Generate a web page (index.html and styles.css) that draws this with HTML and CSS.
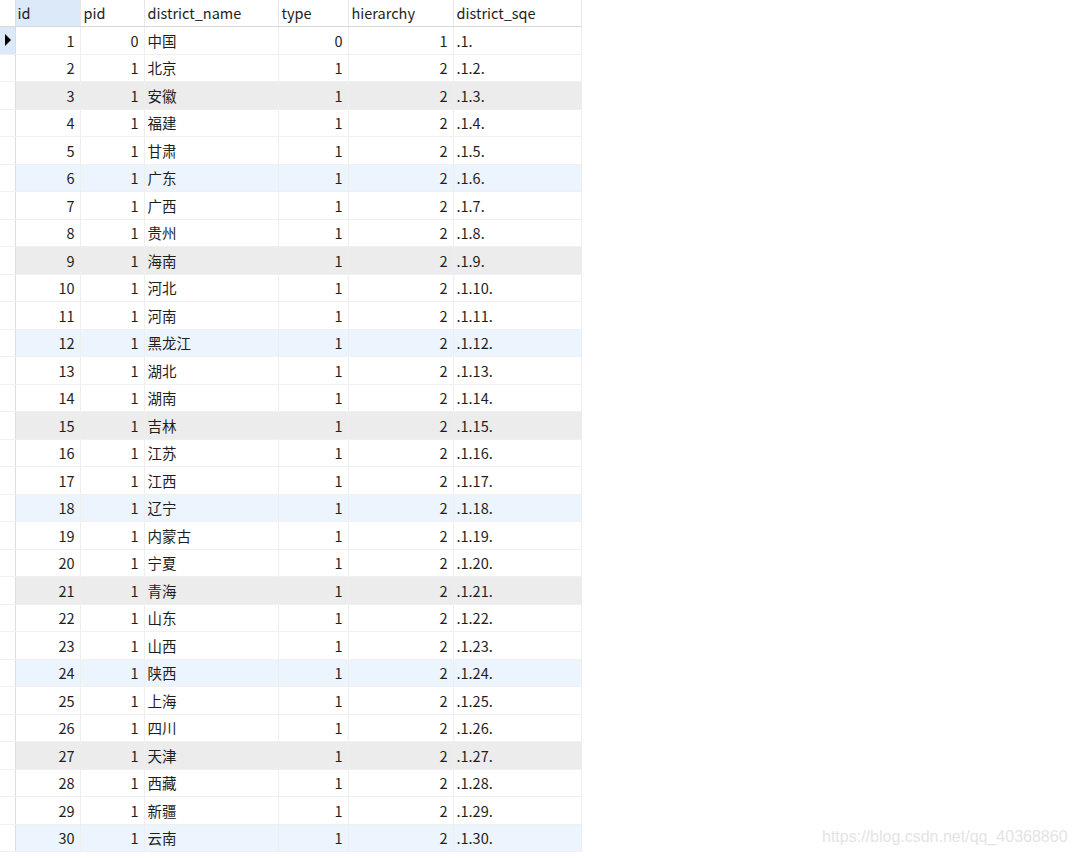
FILE: index.html
```html
<!DOCTYPE html>
<html lang="zh-CN">
<head>
<meta charset="utf-8">
<title>district</title>
<link rel="stylesheet" href="styles.css">
</head>
<body>
<div class="page">
<table class="grid">
<colgroup>
<col class="c-ind"><col class="c-id"><col class="c-pid"><col class="c-name"><col class="c-type"><col class="c-hier"><col class="c-sqe">
</colgroup>
<thead>
<tr><th class="ind"></th><th class="sel">id</th><th>pid</th><th>district_name</th><th>type</th><th>hierarchy</th><th>district_sqe</th></tr>
</thead>
<tbody>
<tr><td class="ind cur"><span class="arrow"></span></td><td class="n">1</td><td class="n">0</td><td>中国</td><td class="n">0</td><td class="n">1</td><td>.1.</td></tr>
<tr><td class="ind"></td><td class="n">2</td><td class="n">1</td><td>北京</td><td class="n">1</td><td class="n">2</td><td>.1.2.</td></tr>
<tr class="gray"><td class="ind"></td><td class="n">3</td><td class="n">1</td><td>安徽</td><td class="n">1</td><td class="n">2</td><td>.1.3.</td></tr>
<tr><td class="ind"></td><td class="n">4</td><td class="n">1</td><td>福建</td><td class="n">1</td><td class="n">2</td><td>.1.4.</td></tr>
<tr><td class="ind"></td><td class="n">5</td><td class="n">1</td><td>甘肃</td><td class="n">1</td><td class="n">2</td><td>.1.5.</td></tr>
<tr class="blue"><td class="ind"></td><td class="n">6</td><td class="n">1</td><td>广东</td><td class="n">1</td><td class="n">2</td><td>.1.6.</td></tr>
<tr><td class="ind"></td><td class="n">7</td><td class="n">1</td><td>广西</td><td class="n">1</td><td class="n">2</td><td>.1.7.</td></tr>
<tr><td class="ind"></td><td class="n">8</td><td class="n">1</td><td>贵州</td><td class="n">1</td><td class="n">2</td><td>.1.8.</td></tr>
<tr class="gray"><td class="ind"></td><td class="n">9</td><td class="n">1</td><td>海南</td><td class="n">1</td><td class="n">2</td><td>.1.9.</td></tr>
<tr><td class="ind"></td><td class="n">10</td><td class="n">1</td><td>河北</td><td class="n">1</td><td class="n">2</td><td>.1.10.</td></tr>
<tr><td class="ind"></td><td class="n">11</td><td class="n">1</td><td>河南</td><td class="n">1</td><td class="n">2</td><td>.1.11.</td></tr>
<tr class="blue"><td class="ind"></td><td class="n">12</td><td class="n">1</td><td>黑龙江</td><td class="n">1</td><td class="n">2</td><td>.1.12.</td></tr>
<tr><td class="ind"></td><td class="n">13</td><td class="n">1</td><td>湖北</td><td class="n">1</td><td class="n">2</td><td>.1.13.</td></tr>
<tr><td class="ind"></td><td class="n">14</td><td class="n">1</td><td>湖南</td><td class="n">1</td><td class="n">2</td><td>.1.14.</td></tr>
<tr class="gray"><td class="ind"></td><td class="n">15</td><td class="n">1</td><td>吉林</td><td class="n">1</td><td class="n">2</td><td>.1.15.</td></tr>
<tr><td class="ind"></td><td class="n">16</td><td class="n">1</td><td>江苏</td><td class="n">1</td><td class="n">2</td><td>.1.16.</td></tr>
<tr><td class="ind"></td><td class="n">17</td><td class="n">1</td><td>江西</td><td class="n">1</td><td class="n">2</td><td>.1.17.</td></tr>
<tr class="blue"><td class="ind"></td><td class="n">18</td><td class="n">1</td><td>辽宁</td><td class="n">1</td><td class="n">2</td><td>.1.18.</td></tr>
<tr><td class="ind"></td><td class="n">19</td><td class="n">1</td><td>内蒙古</td><td class="n">1</td><td class="n">2</td><td>.1.19.</td></tr>
<tr><td class="ind"></td><td class="n">20</td><td class="n">1</td><td>宁夏</td><td class="n">1</td><td class="n">2</td><td>.1.20.</td></tr>
<tr class="gray"><td class="ind"></td><td class="n">21</td><td class="n">1</td><td>青海</td><td class="n">1</td><td class="n">2</td><td>.1.21.</td></tr>
<tr><td class="ind"></td><td class="n">22</td><td class="n">1</td><td>山东</td><td class="n">1</td><td class="n">2</td><td>.1.22.</td></tr>
<tr><td class="ind"></td><td class="n">23</td><td class="n">1</td><td>山西</td><td class="n">1</td><td class="n">2</td><td>.1.23.</td></tr>
<tr class="blue"><td class="ind"></td><td class="n">24</td><td class="n">1</td><td>陕西</td><td class="n">1</td><td class="n">2</td><td>.1.24.</td></tr>
<tr><td class="ind"></td><td class="n">25</td><td class="n">1</td><td>上海</td><td class="n">1</td><td class="n">2</td><td>.1.25.</td></tr>
<tr><td class="ind"></td><td class="n">26</td><td class="n">1</td><td>四川</td><td class="n">1</td><td class="n">2</td><td>.1.26.</td></tr>
<tr class="gray"><td class="ind"></td><td class="n">27</td><td class="n">1</td><td>天津</td><td class="n">1</td><td class="n">2</td><td>.1.27.</td></tr>
<tr><td class="ind"></td><td class="n">28</td><td class="n">1</td><td>西藏</td><td class="n">1</td><td class="n">2</td><td>.1.28.</td></tr>
<tr><td class="ind"></td><td class="n">29</td><td class="n">1</td><td>新疆</td><td class="n">1</td><td class="n">2</td><td>.1.29.</td></tr>
<tr class="blue"><td class="ind"></td><td class="n">30</td><td class="n">1</td><td>云南</td><td class="n">1</td><td class="n">2</td><td>.1.30.</td></tr>
</tbody>
</table>
<div class="watermark">https://blog.csdn.net/qq_40368860</div>
</div>
</body>
</html>
```

FILE: styles.css
```css
html, body {
  margin: 0;
  padding: 0;
  background: #ffffff;
}
.page {
  position: relative;
  width: 1075px;
  height: 858px;
  overflow: hidden;
}
.grid {
  border-collapse: collapse;
  table-layout: fixed;
  width: 581px;
  font-family: "Noto Sans CJK SC", "Noto Sans", sans-serif;
  font-size: 14.5px;
  color: #1e1e1e;
}
.c-ind { width: 15px; }
.c-id { width: 65px; }
.c-pid { width: 64px; }
.c-name { width: 134px; }
.c-type { width: 70px; }
.c-hier { width: 105px; }
.c-sqe { width: 128px; }

.grid th {
  height: 26px;
  padding: 0 3px;
  text-align: left;
  font-weight: normal;
  border-right: 1px solid #e6e6e6;
  border-bottom: 1px solid #d8d8d8;
  background: #ffffff;
  white-space: nowrap;
  overflow: hidden;
  line-height: 24px;
}
.grid th.sel {
  background: #dce9f8;
  padding-left: 2px;
}
.grid td {
  height: 27.5px;
  padding: 0 3px;
  border-right: 1px solid #eeeeee;
  border-bottom: 1px solid #f0f0f0;
  white-space: nowrap;
  overflow: hidden;
  line-height: 25px;
  box-sizing: border-box;
}
.grid td.n {
  text-align: right;
  padding-right: 5px;
}
.grid .ind {
  padding: 0;
  background: #ffffff;
  border-right: 1px solid #dcdcdc;
}
.grid td.ind.cur {
  background: #dce9f8;
}
.arrow {
  display: block;
  width: 0;
  height: 0;
  margin-left: 5px;
  border-top: 6px solid transparent;
  border-bottom: 6px solid transparent;
  border-left: 6px solid #000000;
}
.grid tr.gray td:not(.ind) {
  background: #ececec;
}
.grid tr.blue td:not(.ind) {
  background: #ecf4fd;
}
.watermark {
  position: absolute;
  left: 822px;
  top: 828px;
  font-family: "Liberation Sans", Arial, sans-serif;
  font-size: 16px;
  color: #e4e4e4;
  white-space: nowrap;
}
```
